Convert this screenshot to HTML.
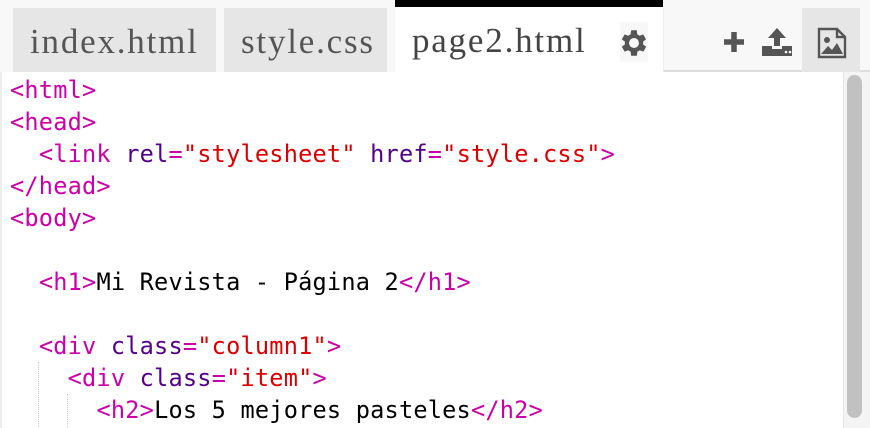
<!DOCTYPE html>
<html><head><style>
body{margin:0;width:870px;height:428px;overflow:hidden;background:#fff;font-family:"Liberation Sans",sans-serif;position:relative}
.top{position:absolute;left:0;top:0;width:870px;height:72px;background:#f8f8f8}
.tab{position:absolute;top:8px;height:64px;background:#e6e6e6;color:#555;font-family:"Liberation Serif",serif;font-size:35px;line-height:68px;box-sizing:border-box;padding-left:17px;letter-spacing:1.8px}
.act{background:#fff;top:7px;height:66px;color:#444}
.bar{position:absolute;left:395px;top:0;width:268px;height:7px;background:#000}
.tb{position:absolute;left:663px;top:8px;width:207px;height:64px;border-bottom:2px solid #ddd;border-left:1px solid #eee;box-sizing:border-box}
.code{position:absolute;left:10px;top:74px;font-family:"DejaVu Sans Mono",monospace;font-size:23.6px;line-height:32px;white-space:pre;color:#000;letter-spacing:0.2px}
.t{color:#c0a}.a{color:#508}.s{color:#d00}
.g{position:absolute;width:0;border-left:1px dotted #ccc}
.sb{position:absolute;left:847px;top:75px;width:15px;height:343px;background:#c1c1c1;border-radius:8px}
.sbt{position:absolute;left:843px;top:72px;width:27px;height:356px;background:#f4f4f4;border-left:1px solid #e6e6e6}
</style></head><body>
<div class="top"></div>
<div class="tab" style="left:13px;width:203px">index.html</div>
<div class="tab" style="left:224px;width:163px">style.css</div>
<div class="tab act" style="left:395px;width:268px">page2.html</div>
<div class="bar"></div>
<div style="position:absolute;left:620px;top:22px;width:28px;height:40px;background:#f7f7f7"></div>
<svg style="position:absolute;left:617px;top:26px" width="34" height="34" viewBox="0 0 24 24"><path fill="#555" d="M19.4 13a7.5 7.5 0 000-2l2.1-1.6-2-3.5-2.5 1a7 7 0 00-1.7-1L15 3h-4l-.4 2.9a7 7 0 00-1.7 1l-2.5-1-2 3.5L6.6 11a7.5 7.5 0 000 2l-2.2 1.6 2 3.5 2.5-1a7 7 0 001.7 1L11 21h4l.4-2.9a7 7 0 001.7-1l2.5 1 2-3.5zM13 15.5a3.5 3.5 0 110-7 3.5 3.5 0 010 7z" transform="translate(-1 0)"/></svg>
<div class="tb"></div>
<div style="position:absolute;left:802px;top:8px;width:58px;height:64px;background:#e6e6e6"></div>
<svg style="position:absolute;left:721px;top:29px" width="26" height="26" viewBox="0 0 26 26"><path d="M13 3v20M3 13h20" stroke="#555" stroke-width="5.5"/></svg>
<svg style="position:absolute;left:760px;top:26px" width="34" height="32" viewBox="0 0 34 32"><path fill="#555" d="M17 2l9 10h-6v8h-6v-8H8zM2 20h10v3h10v-3h10v10H2z"/><circle cx="26" cy="26" r="1.3" fill="#f8f8f8"/><circle cx="30" cy="26" r="1.3" fill="#f8f8f8"/></svg>
<svg style="position:absolute;left:816px;top:27px" width="32" height="32" viewBox="0 0 32 32"><path d="M3 2h18l8 8v20H3z" fill="none" stroke="#555" stroke-width="2.4"/><path d="M21 2v8h8" fill="none" stroke="#555" stroke-width="2.4"/><circle cx="11" cy="13" r="3" fill="#555"/><path d="M5 27l7-8 4 4 5-7 6 11z" fill="#555"/></svg>
<div class="sbt"></div><div class="sb"></div>
<div style="position:absolute;left:0;top:72px;width:2px;height:356px;background:#eee"></div>
<div class="g" style="left:38px;top:362px;height:66px"></div>
<div class="g" style="left:67px;top:394px;height:34px"></div>
<div class="code"><span class="t">&lt;html&gt;</span>
<span class="t">&lt;head&gt;</span>
  <span class="t">&lt;link</span> <span class="a">rel</span><span class="t">=</span><span class="s">"stylesheet"</span> <span class="a">href</span><span class="t">=</span><span class="s">"style.css"</span><span class="t">&gt;</span>
<span class="t">&lt;/head&gt;</span>
<span class="t">&lt;body&gt;</span>

  <span class="t">&lt;h1&gt;</span>Mi Revista - Página 2<span class="t">&lt;/h1&gt;</span>

  <span class="t">&lt;div</span> <span class="a">class</span><span class="t">=</span><span class="s">"column1"</span><span class="t">&gt;</span>
    <span class="t">&lt;div</span> <span class="a">class</span><span class="t">=</span><span class="s">"item"</span><span class="t">&gt;</span>
      <span class="t">&lt;h2&gt;</span>Los 5 mejores pasteles<span class="t">&lt;/h2&gt;</span></div>
</body></html>
